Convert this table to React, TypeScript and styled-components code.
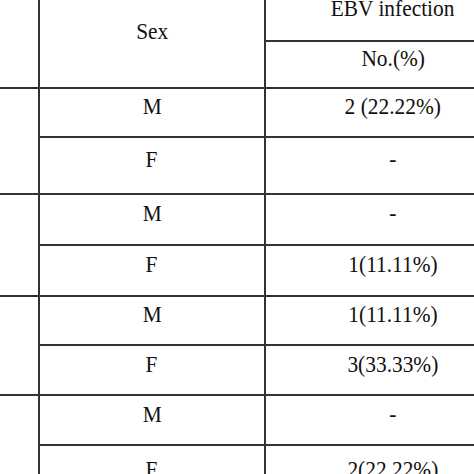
import styled, { createGlobalStyle } from 'styled-components'

const GlobalStyle = createGlobalStyle`
  html, body {
    margin: 0;
    padding: 0;
    background: #ffffff;
    overflow: hidden;
  }
`

const Frame = styled.div`
  width: 474px;
  height: 474px;
  overflow: hidden;
  background: #ffffff;
`

const Table = styled.table`
  border-collapse: collapse;
  table-layout: fixed;
  width: 540px;
  margin: -14px 0 0 -20px;
  font-family: 'Liberation Serif', 'Times New Roman', serif;
  font-size: 23px;
  color: #111111;
`

const Row = styled.tr<{ $h: number }>`
  height: ${({ $h }) => $h}px;
`

const Cell = styled.td`
  border: 2px solid #333333;
  padding: 0 0 11px;
  text-align: center;
  vertical-align: middle;
  white-space: nowrap;
  font-weight: normal;
`

const HeadCell = styled(Cell).attrs({ as: 'th' })``

// the source type is set a little narrow, so squeeze it horizontally
const Label = styled.span`
  display: inline-block;
  transform: scaleX(0.93);
`

type Group = { rows: [string, string][]; heights: [number, number] }

const groups: Group[] = [
  { rows: [['M', '2 (22.22%)'], ['F', '-']], heights: [49, 57] },
  { rows: [['M', '-'], ['F', '1(11.11%)']], heights: [51, 51] },
  { rows: [['M', '1(11.11%)'], ['F', '3(33.33%)']], heights: [49, 50] },
  { rows: [['M', '-'], ['F', '2(22.22%)']], heights: [50, 60] },
]

export default function App() {
  return (
    <Frame>
      <GlobalStyle />
      <Table>
        <colgroup>
          <col style={{ width: 57.5 }} />
          <col style={{ width: 226.5 }} />
          <col style={{ width: 256 }} />
        </colgroup>
        <thead>
          <Row $h={54}>
            <HeadCell rowSpan={2} />
            <HeadCell rowSpan={2}>
              <Label>Sex</Label>
            </HeadCell>
            <HeadCell>
              <Label>EBV infection</Label>
            </HeadCell>
          </Row>
          <Row $h={47}>
            <HeadCell>
              <Label>No.(%)</Label>
            </HeadCell>
          </Row>
        </thead>
        <tbody>
          {groups.map((group, gi) =>
            group.rows.map(([sex, value], ri) => (
              <Row key={`${gi}-${ri}`} $h={group.heights[ri]}>
                {ri === 0 && <Cell rowSpan={2} />}
                <Cell>
                  <Label>{sex}</Label>
                </Cell>
                <Cell>
                  <Label>{value}</Label>
                </Cell>
              </Row>
            )),
          )}
        </tbody>
      </Table>
    </Frame>
  )
}
